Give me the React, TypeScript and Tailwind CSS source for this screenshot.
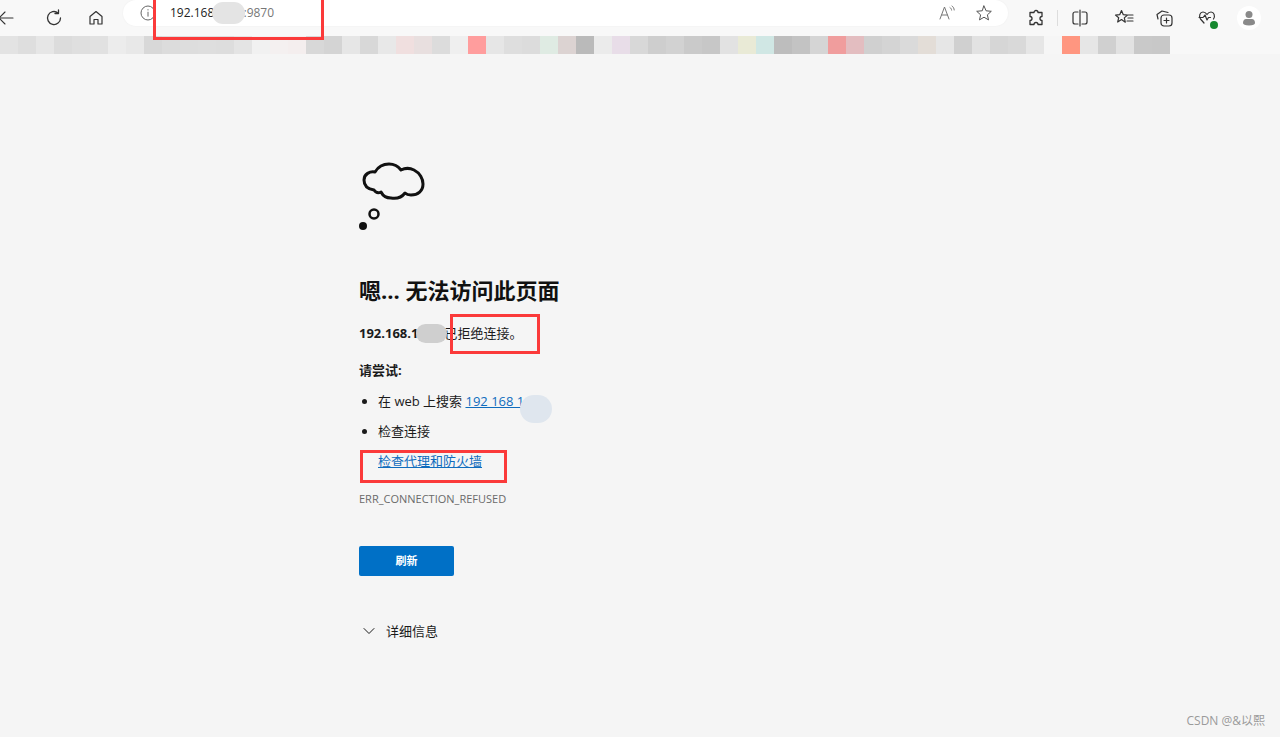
const cjk = '"Open Sans","Noto Sans CJK SC",sans-serif';
const blocks = ["#e3e3e3","#dedede","#e6e6e6","#dcdcdc","#dfdfdf","#e1e1e1","#ececec","#e8e8e8","#d8d8d8","#dcdcdc","#dddddd","#dedede","#dddddd","#e4e4e4","#f1f1f1","#f4f0f0","#f4eeee","#d8d8d8","#d4d4d4","#e6e6e6","#d8d8d8","#e8e8e8","#f0dfdf","#e8dfdf","#dcdcdc","#efefef","#ff9d9d","#e6e6e6","#dedede","#dcdcdc","#dfebe3","#dcd3d2","#bababa","#ebebeb","#e8dde8","#d8d8d8","#cecece","#d2d2d2","#cacaca","#c7c7c7","#e2e2e2","#e9ead6","#d0e7e4","#bdbdbd","#c3c3c3","#d5d5d5","#f09d9d","#e3bdc0","#d0d0d0","#d4d4d4","#dadada","#e3ddd7","#e6e6e6","#d0d0d0","#e2e2e2","#d6d6d6","#d9d9d9","#e6e6e6","#f6f6f6","#ff9680","#e6e6e6","#d0d0d0","#e2e2e2","#c9c9c9","#c8c8c8"];

const stroke = { fill: "none", stroke: "currentColor", strokeLinecap: "round" as const, strokeLinejoin: "round" as const };

export default function App() {
  return (
    <div className="relative h-[737px] w-[1280px] overflow-hidden bg-[#f5f5f5] text-[#1b1b1b]" style={{ fontFamily: cjk }}>
      <header className="flex h-9 items-center bg-[#f8f8f8] text-[#333]">
        <svg width="16" height="16" viewBox="0 0 16 16" className="ml-[-2px]" {...stroke} strokeWidth="1.1"><path d="M1 8h14M7 2 1 8l6 6" /></svg>
        <svg width="18" height="18" viewBox="0 0 18 18" className="ml-[31px]" {...stroke} strokeWidth="1.3"><path d="M15.5 9A6.5 6.5 0 1 1 13 3.9M13.5 1v3.5H10" /></svg>
        <svg width="16" height="16" viewBox="0 0 16 16" className="ml-[25px]" {...stroke} strokeWidth="1.2"><path d="M2 14V6.5L8 1.5l6 5V14h-4V9.5H6V14z" /></svg>
        <div className="ml-[19px] flex h-[26px] w-[885px] mt-[-10px] items-center rounded-r-[13px] rounded-l-[13px] bg-white pl-[17px] shadow-[0_0_2px_rgba(0,0,0,0.05)]">
          <svg width="16" height="16" viewBox="0 0 16 16" className="text-[#666]" {...stroke} strokeWidth="1"><circle cx="8" cy="8" r="7" /><path d="M8 7.2v4M8 4.6v.4" /></svg>
          <span className="ml-[14px] text-xs text-[#222]">192.168.</span>
          <span className="ml-[26px] text-xs text-[#777]">:9870</span>
          <svg width="18" height="18" viewBox="0 0 18 18" className="ml-auto text-[#777]" {...stroke} strokeWidth="1"><path d="M2 15 6.5 3l4.5 12M3.7 11h5.6M12 3.5c1 .6 1.5 1.6 1.6 2.6M14 2c1.4 1 2.100 2.300 2.200 4" /></svg>
          <svg width="18" height="18" viewBox="0 0 18 18" className="ml-[19px] mr-[15px] text-[#555]" {...stroke} strokeWidth="1"><path d="m9 2 2.100 4.800 5.200.5-3.900 3.500 1.100 5.100L9 13.200l-4.500 2.700 1.100-5.100-3.900-3.500 5.200-.5z" /></svg>
        </div>
        <svg width="18" height="18" viewBox="0 0 18 18" className="ml-[19px]" {...stroke} strokeWidth="1.3"><path d="M7 3.500a2 2 0 0 1 4 0h4v4a2 2 0 0 0 0 4v4h-4a2 2 0 0 0-4 0H3v-4a2 2 0 0 0 0-4v-4z" /></svg>
        <div className="ml-[12px] h-[16px] w-px bg-[#ddd]" />
        <svg width="18" height="18" viewBox="0 0 18 18" className="ml-[13px]" {...stroke} strokeWidth="1.2"><path d="M9 1v16M7 3H4a2 2 0 0 0-2 2v8a2 2 0 0 0 2 2h3M11 3h3a2 2 0 0 1 2 2v8a2 2 0 0 1-2 2h-3" /></svg>
        <svg width="20" height="18" viewBox="0 0 20 18" className="ml-[25px]" {...stroke} strokeWidth="1.2"><path d="m7.500 1.500 1.800 4.200 4.200.4-3.200 2.800 1 4.300L7.500 10.500 3.700 13l1-4.300L1.500 6.100l4.200-.4zM14 6h5M14 9h5M13 12h6" /></svg>
        <svg width="18" height="18" viewBox="0 0 18 18" className="ml-[22px]" {...stroke} strokeWidth="1.2"><path d="M2 10 1 5.500 6 2l6 1.500" /><rect x="5" y="6" width="11" height="11" rx="3" /><path d="M10.500 9v5M8 11.500h5" /></svg>
        <span className="relative ml-[24px] h-[18px] w-[18px]">
          <svg width="18" height="18" viewBox="0 0 18 18" {...stroke} strokeWidth="1.2"><path d="M6 14 2.500 10C.5 7 2 3 5 3c1.800 0 3 1 4 2.500C10 4 11.200 3 13 3c3 0 4.500 4 2.500 7M1 8.500h4l2-2.500 2 5 1.500-2.500h2" /></svg>
          <span className="absolute bottom-[-2px] right-[-2px] h-[8px] w-[8px] rounded-full bg-[#16882f]" />
        </span>
        <div className="ml-[21px] flex h-[24px] w-[24px] items-center justify-center rounded-full bg-white">
          <svg width="18" height="18" viewBox="0 0 18 18" className="text-[#8a8a8a]" fill="currentColor"><circle cx="9" cy="5.500" r="3.500" /><path d="M3 14c0-2.500 1.500-4 3-4h6c1.500 0 3 1.500 3 4 0 1.500-2 2.500-6 2.500S3 15.500 3 14z" /></svg>
        </div>
      </header>
      <div className="flex h-[18px] bg-[#f8f8f8]">
        {blocks.map((c, i) => <div key={i} className="h-full w-[18px]" style={{ background: c }} />)}
      </div>

      <main className="ml-[359px] w-[420px]">
        <svg width="70" height="70" viewBox="0 0 70 70" className="mt-[107px] text-[#111]" {...stroke}>
          <path strokeWidth="3" d="M15 29C8 28 5 24 5 19c0-6 6-9 11-8 3-5 8-8 14-8 5 0 9 2 12 6 4-2 9-2 13 0 6 3 9 9 9 14 0 7-5 11-12 11-3 0-5-1-6-2-3 4-8 6-14 5-4 0-8-2-10-6-2 1-5 1-7-2z" />
          <circle cx="15" cy="53" r="4.500" strokeWidth="2.500" />
          <circle cx="4" cy="65" r="4" fill="currentColor" stroke="none" />
        </svg>
        <h1 className="mt-[44px] text-[22px] leading-[30px] font-bold text-[#111]">嗯... 无法访问此页面</h1>
        <p className="mt-[18px] text-[13px] leading-[20px]"><b>192.168.1</b><span className="ml-[26px]">已拒绝连接。</span></p>
        <p className="mt-[17px] text-[13px] leading-[20px] font-bold">请尝试:</p>
        <ul className="mt-[11px] list-disc pl-[19px] text-[13px] leading-[20px]">
          <li>在 web 上搜索 <a className="text-[#0f6cbd] underline">192 168 1</a></li>
          <li className="mt-[10px]">检查连接</li>
          <li className="mt-[10px] list-none"><a className="text-[#0f6cbd] underline">检查代理和防火墙</a></li>
        </ul>
        <p className="mt-[18px] text-[11px] leading-[20px] text-[#6a6a6a]">ERR_CONNECTION_REFUSED</p>
        <button className="mt-[37px] flex h-[30px] w-[95px] items-center justify-center rounded-[2px] bg-[#0070c6] text-[11px] font-bold text-white">刷新</button>
        <div className="mt-[45px] flex items-center gap-[16px] text-[13px] leading-[20px]">
          <svg width="12" height="8" viewBox="0 0 12 8" className="ml-[4px]" {...stroke} strokeWidth="1"><path d="m1 1.500 5 5 5-5" /></svg>
          <span className="ml-[-5px]">详细信息</span>
        </div>
      </main>

      {/* redaction blurs */}
      <div className="absolute left-[212px] top-[2px] h-[22px] w-[33px] rounded-full bg-[#e4e4e4]" />
      <div className="absolute left-[416px] top-[324px] h-[19px] w-[31px] rounded-full bg-[#cfcfcf]" />
      <div className="absolute left-[520px] top-[395px] h-[28px] w-[32px] rounded-full bg-[#dfe6ee]" />

      {/* annotation boxes */}
      <div className="absolute left-[153px] top-[-3px] h-[43px] w-[171px] border-[3px] border-[#fb3a3a]" />
      <div className="absolute left-[450px] top-[314px] h-[40px] w-[90px] border-[3px] border-[#fb3a3a]" />
      <div className="absolute left-[360px] top-[450px] h-[33px] w-[147px] border-[3px] border-[#fb3a3a]" />

      <span className="absolute right-[15px] top-[713px] text-xs text-[#9a9a9a]">CSDN @&amp;以熙</span>
    </div>
  );
}
